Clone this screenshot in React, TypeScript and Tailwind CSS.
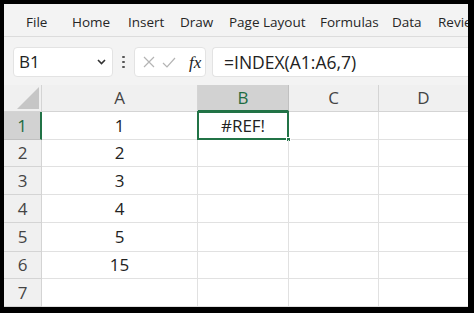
import React from "react";

const font = { fontFamily: '"Open Sans", "Noto Sans", sans-serif' };

const menu = [
  { label: "File", w: "w-[46px]" },
  { label: "Home", w: "w-[56px]" },
  { label: "Insert", w: "w-[52px]" },
  { label: "Draw", w: "w-[49px]" },
  { label: "Page Layout", w: "w-[91px]" },
  { label: "Formulas", w: "w-[72px]" },
  { label: "Data", w: "w-[46px]" },
  { label: "Review", w: "w-[60px]" },
];

const rows: { n: number; a: string; h: string }[] = [
  { n: 1, a: "1", h: "h-[28px]" },
  { n: 2, a: "2", h: "h-[27px]" },
  { n: 3, a: "3", h: "h-[28px]" },
  { n: 4, a: "4", h: "h-[28px]" },
  { n: 5, a: "5", h: "h-[29px]" },
  { n: 6, a: "15", h: "h-[27px]" },
  { n: 7, a: "", h: "h-[28px]" },
];

function Corner() {
  return (
    <div className="w-[38px] h-full shrink-0 bg-[#f0f0f0] border-r border-b border-[#d4d4d4] relative">
      <svg className="absolute right-[2px] bottom-[2px]" width="22" height="22" viewBox="0 0 22 22">
        <polygon points="22,0 22,22 0,22" fill="#c6c6c6" />
      </svg>
    </div>
  );
}

export default function App() {
  return (
    <div className="w-[474px] h-[313px] bg-black pt-[4px] pl-[4px] pr-[6px] pb-[6px] overflow-hidden" style={font}>
      <div className="w-[464px] h-[303px] bg-[#f3f3f3] flex flex-col overflow-hidden">
        {/* menu */}
        <div className="h-[33px] flex items-center pt-[5px] pl-[22px] text-[13.5px] text-[#262626] whitespace-nowrap border-b border-[#dcdcdc] overflow-hidden">
          {menu.map((m) => (
            <span key={m.label} className={`${m.w} shrink-0`}>
              {m.label}
            </span>
          ))}
        </div>

        {/* formula bar */}
        <div className="h-[48px] flex items-center pt-[2px] pl-[9px] shrink-0">
          <div className="w-[100px] h-[30px] bg-white rounded-[4px] border border-[#e3e3e3] flex items-center justify-between pl-[5px] pr-[6px]">
            <span className="text-[17px] text-[#222]">B1</span>
            <svg width="9" height="6" viewBox="0 0 9 6">
              <path d="M1 1 L4.5 4.5 L8 1" stroke="#333" strokeWidth="1.6" fill="none" />
            </svg>
          </div>
          <div className="w-[21px] flex flex-col items-center gap-[2.5px]">
            <span className="w-[2.5px] h-[2.5px] rounded-full bg-[#555]" />
            <span className="w-[2.5px] h-[2.5px] rounded-full bg-[#555]" />
            <span className="w-[2.5px] h-[2.5px] rounded-full bg-[#555]" />
          </div>
          <div className="w-[72px] h-[30px] bg-white rounded-[4px] border border-[#e3e3e3] flex items-center pl-[8px]">
            <svg width="12" height="12" viewBox="0 0 12 12">
              <path d="M1 1 L11 11 M11 1 L1 11" stroke="#b4b4b4" strokeWidth="1.2" />
            </svg>
            <svg className="ml-[7px]" width="14" height="11" viewBox="0 0 14 11">
              <path d="M1 6 L5 10 L13 1" stroke="#b4b4b4" strokeWidth="1.2" fill="none" />
            </svg>
            <span
              className="ml-[13px] text-[17px] italic text-[#222] leading-none"
              style={{ fontFamily: '"Liberation Serif", serif' }}
            >
              fx
            </span>
          </div>
          <div className="ml-[6px] flex-1 h-[30px] bg-white rounded-l-[4px] border border-r-0 border-[#e3e3e3] flex items-center pl-[11px]">
            <span className="text-[17.5px] text-[#222]">=INDEX(A1:A6,7)</span>
          </div>
        </div>

        {/* grid */}
        <div className="flex-1 bg-white flex flex-col text-[17px]">
          <div className="h-[27px] flex shrink-0">
            <Corner />
            <div className="w-[156px] bg-[#f0f0f0] border-r border-b border-[#d4d4d4] flex items-center justify-center text-[#444]">A</div>
            <div className="w-[91px] bg-[#d2d2d2] border-r border-[#c0c0c0] border-b-2 border-b-[#217346] flex items-center justify-center text-[#1e6b41]">B</div>
            <div className="w-[90px] bg-[#f0f0f0] border-r border-b border-[#d4d4d4] flex items-center justify-center text-[#444]">C</div>
            <div className="w-[89px] bg-[#f0f0f0] border-b border-[#d4d4d4] flex items-center justify-center text-[#444]">D</div>
          </div>
          {rows.map((r) => {
            const sel = r.n === 1;
            return (
              <div key={r.n} className={`${r.h} flex shrink-0`}>
                <div
                  className={
                    sel
                      ? "w-[38px] bg-[#d2d2d2] border-r-2 border-r-[#217346] border-b border-b-[#c0c0c0] flex items-center justify-center text-[#1e6b41]"
                      : "w-[38px] bg-[#f0f0f0] border-r border-b border-[#d4d4d4] flex items-center justify-center text-[#444]"
                  }
                >
                  {r.n}
                </div>
                <div className="w-[156px] border-r border-b border-[#e1e1e1] flex items-center justify-center text-[#222]">{r.a}</div>
                <div className="w-[91px] border-r border-b border-[#e1e1e1] relative flex items-center justify-center text-[#222]">
                  {sel && (
                    <>
                      <div className="absolute -left-px -top-px w-[92px] h-[29px] border-2 border-[#217346]" />
                      <div className="absolute -right-[3px] -bottom-[3px] w-[5px] h-[5px] bg-[#217346] border border-white" />
                      <span>#REF!</span>
                    </>
                  )}
                </div>
                <div className="w-[90px] border-r border-b border-[#e1e1e1]" />
                <div className="w-[89px] border-b border-[#e1e1e1]" />
              </div>
            );
          })}
        </div>
      </div>
    </div>
  );
}
